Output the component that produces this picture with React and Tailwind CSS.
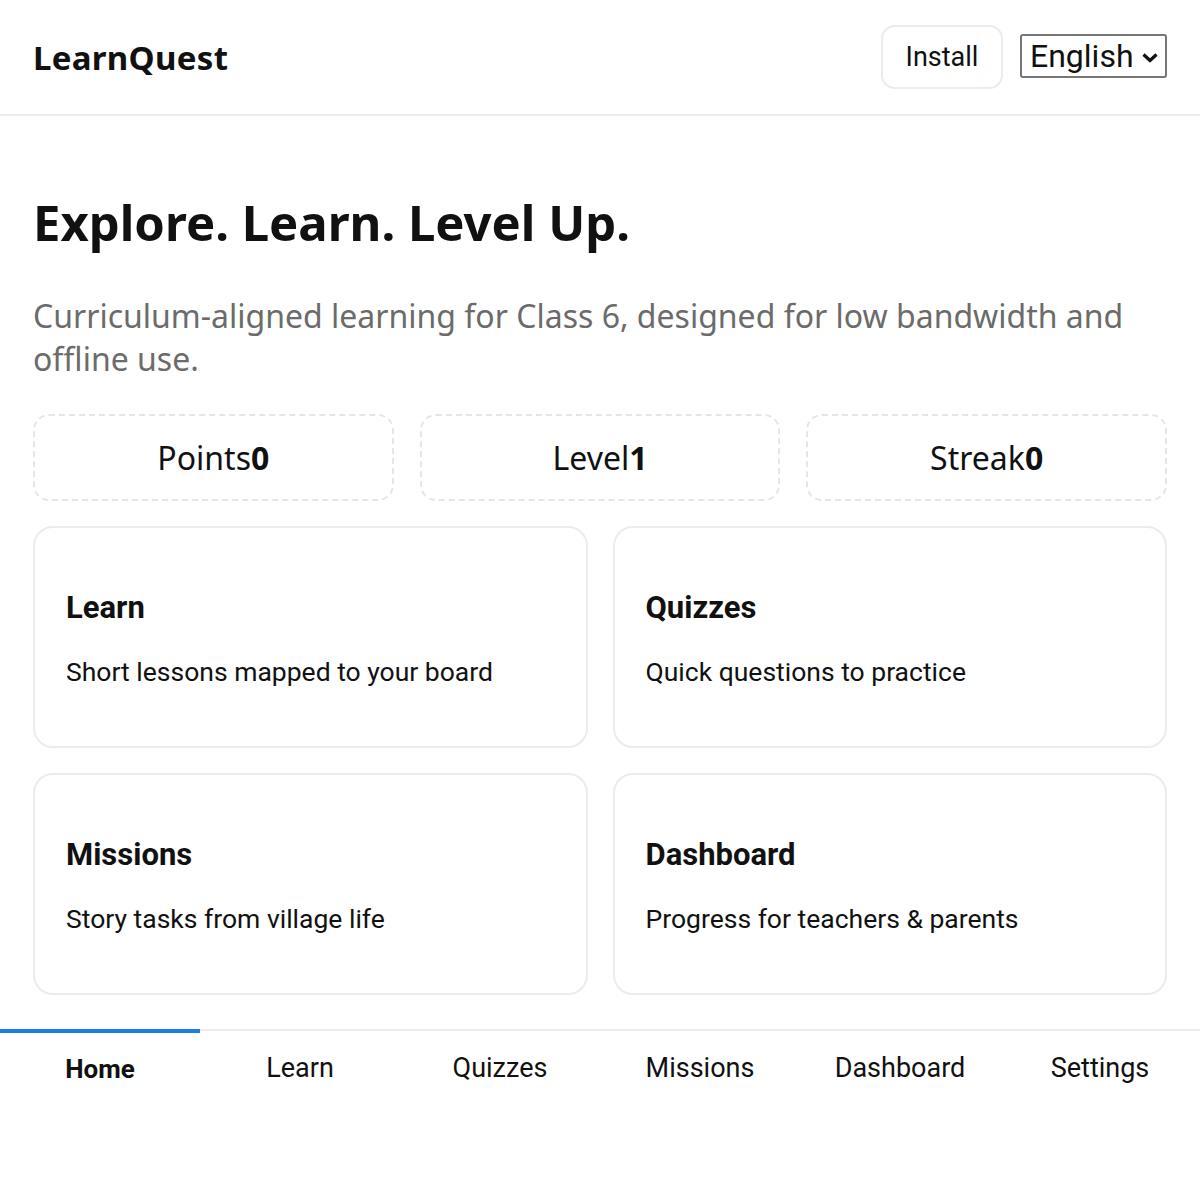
import React from "react";

const stats = [
  { label: "Points", value: "0" },
  { label: "Level", value: "1" },
  { label: "Streak", value: "0" },
];

const cards = [
  { title: "Learn", desc: "Short lessons mapped to your board" },
  { title: "Quizzes", desc: "Quick questions to practice" },
  { title: "Missions", desc: "Story tasks from village life" },
  { title: "Dashboard", desc: "Progress for teachers & parents" },
];

const tabs = ["Home", "Learn", "Quizzes", "Missions", "Dashboard", "Settings"];

export default function App() {
  return (
    <div className="min-h-[1200px] bg-white text-[#111] font-['Noto_Sans',sans-serif]">
      <header className="h-[116px] flex items-center justify-between px-[33px] border-b-2 border-[#ececec]">
        <div className="text-[33px] font-bold tracking-[0.3px] leading-none">LearnQuest</div>
        <div className="flex items-center gap-[17px]">
          <button className="h-[64px] w-[122px] rounded-[14px] border-2 border-[#ececec] bg-white text-[27px] font-['Roboto',sans-serif] text-[#111]">
            Install
          </button>
          <div className="flex items-center h-[44px] w-[147px] border-2 border-[#767676] rounded-[3px] pl-[8px] pr-[6px] font-['Roboto',sans-serif] text-[32px] leading-none mb-[2px]">
            <span className="flex-1">English</span>
            <svg width="18" height="13" viewBox="0 0 18 13" className="mt-[2px]">
              <path d="M2.5 3.5l6.5 6 6.5-6" fill="none" stroke="#111" strokeWidth="3.2" />
            </svg>
          </div>
        </div>
      </header>

      <main className="px-[33px]">
        <h1 className="mt-[76px] text-[49px] font-bold leading-[60px]">Explore. Learn. Level Up.</h1>
        <p className="mt-[42px] text-[32px] leading-[43px] text-[#6b6b6b]">
          Curriculum-aligned learning for Class 6, designed for low bandwidth and offline use.
        </p>

        <div className="mt-[34px] grid grid-cols-3 gap-[26px]">
          {stats.map((s) => (
            <div
              key={s.label}
              className="h-[87px] flex items-center justify-center rounded-[16px] border-2 border-dashed border-[#e6e6e6] text-[32px]"
            >
              <span>{s.label}</span>
              <strong className="font-bold">{s.value}</strong>
            </div>
          ))}
        </div>

        <div className="mt-[25px] grid grid-cols-2 gap-[25px] font-['Roboto',sans-serif]">
          {cards.map((c) => (
            <div
              key={c.title}
              className="h-[222px] rounded-[20px] border-2 border-[#ececec] px-[31px] pt-[61px]"
            >
              <h2 className="text-[31px] font-bold leading-[38px]">{c.title}</h2>
              <p className="mt-[29px] text-[26.5px] leading-[31px]">{c.desc}</p>
            </div>
          ))}
        </div>
      </main>

      <nav className="mt-[34px] border-t-2 border-[#ececec] grid grid-cols-6 font-['Roboto',sans-serif]">
        {tabs.map((t, i) => (
          <div key={t} className="relative h-[74px] flex items-center justify-center">
            {i === 0 && <div className="absolute -top-[2px] left-0 right-0 h-[4px] bg-[#1a7fe8]" />}
            <span className={i === 0 ? "text-[26px] font-bold mt-[2px]" : "text-[27px]"}>{t}</span>
          </div>
        ))}
      </nav>
    </div>
  );
}
